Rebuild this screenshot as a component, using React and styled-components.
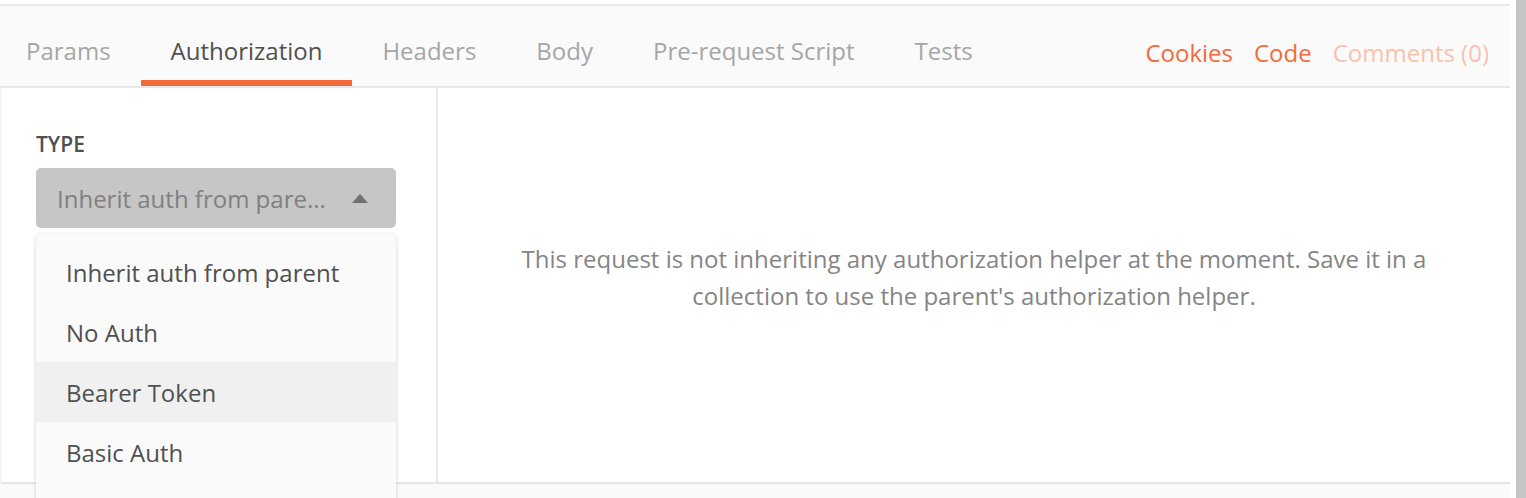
import React from 'react'
import styled, { createGlobalStyle } from 'styled-components'

const GlobalStyle = createGlobalStyle`
  body {
    margin: 0;
    background: #fff;
    font-family: 'Open Sans', 'DejaVu Sans', sans-serif;
  }
`
const Page = styled.div`
  display: flex;
  height: 498px;
  overflow: hidden;
`
const Main = styled.div`
  flex: 1;
  display: flex;
  flex-direction: column;
  padding-top: 4px;
  margin-right: 6px;
  min-width: 0;
`
const Scrollbar = styled.div`
  width: 10px;
  background: #c6c6c6;
`
const TabBar = styled.div`
  height: 80px;
  display: flex;
  align-items: stretch;
  background: #fafafa;
  border-top: 2px solid #e8e8e8;
  border-bottom: 2px solid #e8e8e8;
`
const Tab = styled.div`
  position: relative;
  display: flex;
  align-items: center;
  padding: 9px 30px 0;
  font-size: 24px;
  color: ${p => (p.active ? '#505050' : '#a6a6a6')};
  &:first-child {
    padding-left: 26px;
  }
  &:after {
    content: '';
    position: absolute;
    left: 0;
    right: 0;
    bottom: 0;
    height: 6px;
    background: ${p => (p.active ? '#f26b3a' : 'transparent')};
  }
`
const Links = styled.div`
  margin-left: auto;
  display: flex;
  align-items: center;
  gap: 21px;
  padding: 12px 21px 0 0;
`
const Link = styled.span`
  font-size: 24px;
  color: ${p => (p.muted ? '#f8c2ab' : '#f26b3a')};
`
const Body = styled.div`
  position: relative;
  height: 394px;
  display: flex;
  border-left: 2px solid #f4f4f4;
  border-bottom: 2px solid #e6e6e6;
`
const Footer = styled.div`
  flex: 1;
  background: #fafafa;
`
const LeftPane = styled.div`
  width: 400px;
  flex-shrink: 0;
  padding: 44px 0 0 34px;
  border-right: 2px solid #ebebeb;
`
const Label = styled.div`
  font-size: 21px;
  font-weight: 600;
  color: #505050;
  line-height: 24px;
  margin-bottom: 12px;
`
const Select = styled.div`
  width: 360px;
  height: 60px;
  box-sizing: border-box;
  display: flex;
  align-items: center;
  justify-content: space-between;
  padding: 0 28px 0 21px;
  background: #c6c6c6;
  border-radius: 5px;
  font-size: 24px;
  color: #808080;
`
const Menu = styled.div`
  position: absolute;
  top: 146px;
  left: 34px;
  width: 360px;
  padding-top: 8px;
  background: #fafafa;
  border-radius: 5px;
  box-shadow: 0 1px 4px rgba(0, 0, 0, 0.18);
  z-index: 2;
`
const MenuItem = styled.div`
  height: 60px;
  display: flex;
  align-items: center;
  padding-left: 30px;
  font-size: 24px;
  color: #505050;
  background: ${p => (p.highlight ? '#f0f0f0' : 'transparent')};
`
const RightPane = styled.div`
  flex: 1;
  display: flex;
  justify-content: center;
  padding-top: 152px;
`
const Message = styled.p`
  margin: 0;
  max-width: 930px;
  text-align: center;
  font-size: 24px;
  line-height: 37px;
  color: #858585;
`

const tabs = ['Params', 'Authorization', 'Headers', 'Body', 'Pre-request Script', 'Tests']
const authTypes = ['Inherit auth from parent', 'No Auth', 'Bearer Token', 'Basic Auth', 'Digest Auth']

const Caret = () => (
  <svg width="16" height="9" viewBox="0 0 16 9">
    <polygon points="8,0 16,9 0,9" fill="#707070" />
  </svg>
)

export default function App() {
  return (
    <Page>
      <GlobalStyle />
      <Main>
        <TabBar>
          {tabs.map(t => (
            <Tab key={t} active={t === 'Authorization'}>
              {t}
            </Tab>
          ))}
          <Links>
            <Link>Cookies</Link>
            <Link>Code</Link>
            <Link muted>Comments (0)</Link>
          </Links>
        </TabBar>
        <Body>
          <LeftPane>
            <Label>TYPE</Label>
            <Select>
              <span>Inherit auth from pare...</span>
              <Caret />
            </Select>
          </LeftPane>
          <Menu>
            {authTypes.map(a => (
              <MenuItem key={a} highlight={a === 'Bearer Token'}>
                {a}
              </MenuItem>
            ))}
          </Menu>
          <RightPane>
            <Message>
              This request is not inheriting any authorization helper at the moment. Save it in a collection to use
              the parent's authorization helper.
            </Message>
          </RightPane>
        </Body>
        <Footer />
      </Main>
      <Scrollbar />
    </Page>
  )
}
